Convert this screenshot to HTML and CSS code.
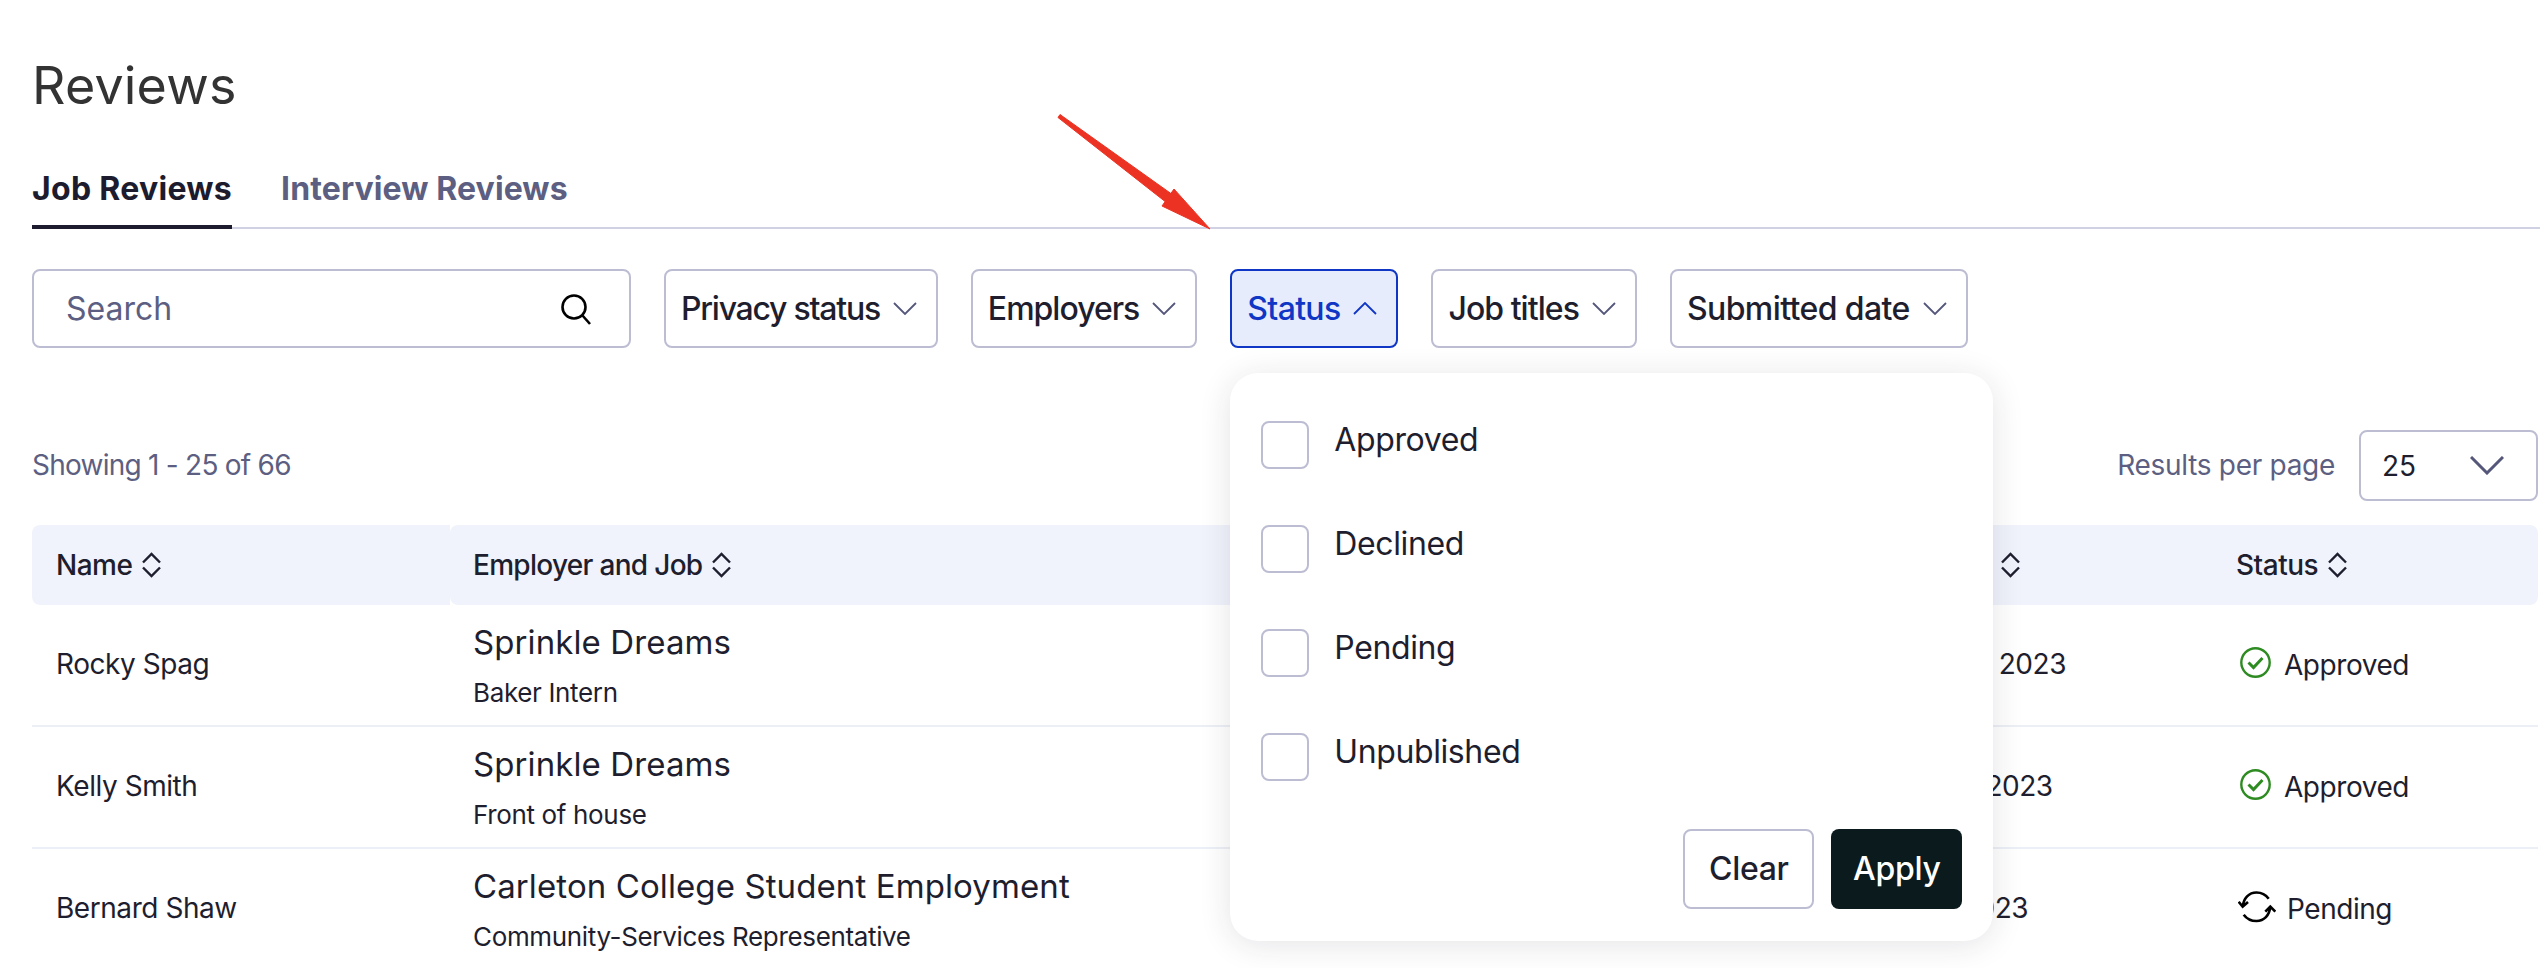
FILE: index.html
```html
<!DOCTYPE html>
<html lang="en">
<head>
<meta charset="utf-8">
<title>Reviews</title>
<link rel="stylesheet" href="styles.css">
</head>
<body>
<main class="page">
  <h1 class="title">Reviews</h1>
  <nav class="tabs">
    <a class="tab tab-active">Job Reviews</a>
    <a class="tab">Interview Reviews</a>
  </nav>
  <div class="filters">
    <div class="search">
      <span class="search-text">Search</span>
      <svg class="search-icon" viewBox="0 0 32 32"><circle cx="14" cy="14" r="11.5"/><path d="M22.5 22.5 30 31"/></svg>
    </div>
    <button class="filter f-privacy">Privacy status <svg class="chev" viewBox="0 0 24 13"><path d="M1 1 12 12 23 1"/></svg></button>
    <button class="filter f-employers">Employers <svg class="chev" viewBox="0 0 24 13"><path d="M1 1 12 12 23 1"/></svg></button>
    <div class="filter-wrap">
      <button class="filter filter-open">Status <svg class="chev" viewBox="0 0 24 13"><path d="M1 12 12 1 23 12"/></svg></button>
      <div class="panel">
        <label class="option"><span class="box"></span><span class="option-text">Approved</span></label>
        <label class="option"><span class="box"></span><span class="option-text">Declined</span></label>
        <label class="option"><span class="box"></span><span class="option-text">Pending</span></label>
        <label class="option"><span class="box"></span><span class="option-text">Unpublished</span></label>
        <div class="panel-actions">
          <button class="btn btn-clear">Clear</button>
          <button class="btn btn-apply">Apply</button>
        </div>
      </div>
    </div>
    <button class="filter f-jobs">Job titles <svg class="chev" viewBox="0 0 24 13"><path d="M1 1 12 12 23 1"/></svg></button>
    <button class="filter f-date">Submitted date <svg class="chev" viewBox="0 0 24 13"><path d="M1 1 12 12 23 1"/></svg></button>
  </div>
  <div class="toolbar">
    <span class="muted showing">Showing 1 - 25 of 66</span>
    <div class="per-page">
      <span class="muted results">Results per page</span>
      <div class="select"><span>25</span><svg class="select-chev" viewBox="0 0 34 19"><path d="M1 1 17 17 33 1"/></svg></div>
    </div>
  </div>
  <table class="table">
    <colgroup><col class="col-name"><col class="col-job"><col class="col-date"><col class="col-status"></colgroup>
    <thead>
      <tr>
        <th><span class="th-in">Name <svg class="sort" viewBox="0 0 21 26"><path d="M2 10.500 10.500 2 19 10.500M2 15.500 10.500 24 19 15.500"/></svg></span></th>
        <th><span class="th-in">Employer and Job <svg class="sort" viewBox="0 0 21 26"><path d="M2 10.500 10.500 2 19 10.500M2 15.500 10.500 24 19 15.500"/></svg></span></th>
        <th><span class="th-in">Submitted date <svg class="sort" viewBox="0 0 21 26"><path d="M2 10.500 10.500 2 19 10.500M2 15.500 10.500 24 19 15.500"/></svg></span></th>
        <th><span class="th-in">Status <svg class="sort" viewBox="0 0 21 26"><path d="M2 10.500 10.500 2 19 10.500M2 15.500 10.500 24 19 15.500"/></svg></span></th>
      </tr>
    </thead>
    <tbody>
      <tr>
        <td>Rocky Spag</td>
        <td><div class="employer">Sprinkle Dreams</div><div class="job">Baker Intern</div></td>
        <td>September 20, 2023</td>
        <td><span class="status"><svg class="st-icon" viewBox="0 0 31 31"><circle cx="15.500" cy="15.500" r="14.200"/><path class="st-check" d="M8.500 15.500 13.500 20.500 22.500 11"/></svg>Approved</span></td>
      </tr>
      <tr>
        <td>Kelly Smith</td>
        <td><div class="employer">Sprinkle Dreams</div><div class="job">Front of house</div></td>
        <td>November 19, 2023</td>
        <td><span class="status"><svg class="st-icon" viewBox="0 0 31 31"><circle cx="15.500" cy="15.500" r="14.200"/><path class="st-check" d="M8.500 15.500 13.500 20.500 22.500 11"/></svg>Approved</span></td>
      </tr>
      <tr>
        <td>Bernard Shaw</td>
        <td><div class="employer">Carleton College Student Employment</div><div class="job">Community-Services Representative</div></td>
        <td>October 25, 2023</td>
        <td><span class="status"><svg class="st-pending" viewBox="0 0 38 32"><path d="M4.700 15.700C5.500 7 11 1.500 18.500 1.500 23.500 1.500 28 4 30.700 7.700M32.300 15.700C31.500 24.500 26 30 18.500 30 13 30 8.500 27.500 5.700 23.700M0.700 10.700 4.700 15.700 10 11M27.300 20.700 32.300 15.700 37.300 20.700"/></svg>Pending</span></td>
      </tr>
    </tbody>
  </table>
</main>
<svg class="arrow" viewBox="0 0 160 122"><path class="arrow-mark" d="M3 5.500 5 2.500 118 83 112 91Z"/><path class="arrow-mark" d="M155 117 107 94 119 77Z"/></svg>
</body>
</html>
```
FILE: styles.css
```css
* { box-sizing: border-box; }
html, body { margin: 0; height: 968px; overflow: hidden; background: #fff; }
body { font-family: Inter, "Liberation Sans", sans-serif; color: #1e1e2e; position: relative; }
.page { padding: 54px 2px 0 32px; }
.title { margin: 0; font-size: 52px; line-height: 64px; font-weight: 400; color: #333; letter-spacing: 0.2px; }
.tabs { display: flex; gap: 49px; margin: 42px -2px 0 0; border-bottom: 2px solid #d0d2e4; height: 69px; }
.tab { font-size: 32px; line-height: 40px; font-weight: 700; color: #5d5f82; height: 69px; padding-top: 9px; letter-spacing: 0.1px; }
.tab-active { color: #1c1c2e; border-bottom: 4px solid #1c1c2e; letter-spacing: 0.3px; }
.filters { display: flex; gap: 33px; margin-top: 40px; height: 79px; }
.search { width: 599px; border: 2px solid #bcbdd3; border-radius: 8px; display: flex; align-items: center; justify-content: space-between; padding: 0 37px 0 32px; }
.search-text { font-size: 32px; color: #5d5f82; }
.search-icon { width: 32px; height: 32px; fill: none; stroke: #000; stroke-width: 2.6; }
.filter { font-family: inherit; font-size: 32px; font-weight: 500; color: #1e1e2e; background: #fff; border: 2px solid #bcbdd3; border-radius: 8px; padding: 0 19px 0 15px; display: flex; align-items: center; gap: 13px; height: 79px; white-space: nowrap; }
.f-privacy { letter-spacing: -1.25px; }
.f-employers { letter-spacing: -1px; }
.f-jobs { letter-spacing: -0.95px; }
.f-date { letter-spacing: -0.6px; }
.chev { width: 24px; height: 13px; fill: none; stroke: #55577a; stroke-width: 1.8; }
.filter-wrap { position: relative; }
.filter-open { color: #0f36c4; background: #e6ecfb; border-color: #0f36c4; letter-spacing: -0.7px; }
.filter-open .chev { stroke: #0f36c4; }
.panel { position: absolute; z-index: 5; left: 0; top: 104px; width: 763px; height: 568px; background: #fff; border-radius: 28px; box-shadow: 0 4px 32px rgba(30, 30, 60, 0.12); padding: 48px 31px 0; }
.option { display: flex; gap: 25px; height: 104px; }
.box { width: 48px; height: 48px; border: 2px solid #bcbdd3; border-radius: 8px; }
.option-text { font-size: 32px; line-height: 40px; margin-top: -1px; letter-spacing: -0.4px; }
.panel-actions { display: flex; justify-content: flex-end; gap: 17px; position: absolute; right: 31px; bottom: 32px; }
.btn { font-family: inherit; font-size: 32px; font-weight: 500; height: 80px; border-radius: 8px; width: 131px; letter-spacing: -0.3px; padding-bottom: 2px; }
.btn-clear { background: #fff; color: #1e1e2e; border: 2px solid #bcbdd3; }
.btn-apply { background: #0b1a1c; color: #fff; border: 0; }
.toolbar { display: flex; justify-content: space-between; align-items: center; margin-top: 82px; height: 71px; }
.muted { font-size: 28px; color: #5d5f82; padding-bottom: 2px; }
.showing { letter-spacing: -0.75px; }
.results { letter-spacing: -0.3px; }
.per-page { display: flex; align-items: center; gap: 24px; }
.select { width: 179px; height: 71px; border: 2px solid #bcbdd3; border-radius: 8px; font-size: 28px; display: flex; align-items: center; justify-content: space-between; padding: 0 32px 0 21px; }
.select-chev { width: 34px; height: 19px; fill: none; stroke: #55577a; stroke-width: 3; }
.table { margin-top: 24px; width: 2506px; border-collapse: separate; border-spacing: 0; table-layout: fixed; font-size: 28px; }
.col-name { width: 418px; }
.col-job { width: 1325px; }
.col-date { width: 438px; }
.col-status { width: 325px; }
th { height: 80px; background: #f0f3fb; text-align: left; font-weight: 500; padding: 0 0 0 24px; letter-spacing: -0.5px; }
th:first-child { border-radius: 8px 0 0 8px; padding-left: 24px; }
th:nth-child(2) { border-radius: 8px 0 0 8px; padding-left: 23px; letter-spacing: -0.7px; }
th:nth-child(3) { padding-left: 21px; }
th:last-child { border-radius: 0 8px 8px 0; padding-left: 23px; }
.th-in { display: inline-flex; align-items: center; gap: 9px; }
.sort { width: 21px; height: 26px; fill: none; stroke: #1e1e2e; stroke-width: 2.4; }
td { height: 122px; padding: 0 0 0 24px; border-bottom: 2px solid #eceff5; white-space: nowrap; letter-spacing: -0.45px; }
td:nth-child(2) { padding-left: 23px; }
td:nth-child(3) { padding-left: 27px; }
td:first-child, td:nth-child(3) { padding-bottom: 3px; }
.employer { font-size: 33px; line-height: 40px; margin-bottom: 15px; letter-spacing: 0.1px; }
.job { font-size: 26px; line-height: 32px; letter-spacing: -0.35px; }
.status { display: inline-flex; align-items: center; gap: 13px; padding-left: 3px; padding-top: 3px; }
.st-icon { width: 31px; height: 31px; margin-top: -5px; fill: none; stroke: #2e8b22; stroke-width: 2.4; }
.st-check { stroke-width: 3; }
.st-pending { width: 38px; height: 32px; margin: -4px -2px 0 -2px; fill: none; stroke: #000; stroke-width: 2.6; }
.arrow { position: absolute; left: 1055px; top: 112px; width: 160px; height: 122px; z-index: 6; }
.arrow-mark { fill: #ec3323; stroke: #ec3323; stroke-width: 1; stroke-linejoin: round; }
```
